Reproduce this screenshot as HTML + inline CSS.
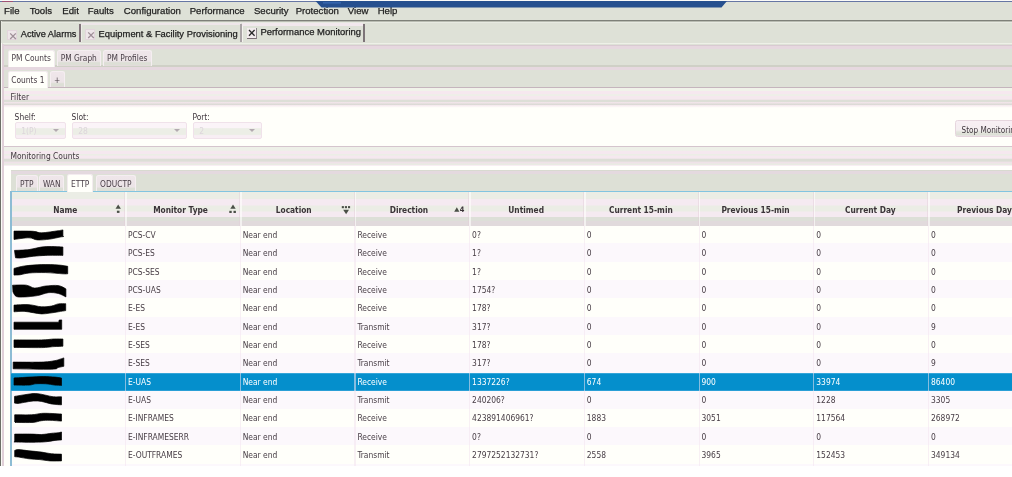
<!DOCTYPE html><html><head><meta charset="utf-8"><title>Performance Monitoring</title><style>html,body{margin:0;padding:0;}
body{width:1012px;height:477px;overflow:hidden;position:relative;background:#f5ecef;font-family:"Liberation Sans",sans-serif;color:#1c1c1c;}
.wrap{position:absolute;left:0;top:0;width:1012px;height:477px;overflow:hidden;will-change:transform;}
.abs{position:absolute;}
.menubar{position:absolute;left:0;top:0;width:1012px;height:20px;background:#dee1d7;}
.menubar span{position:absolute;top:5px;font-size:9.6px;line-height:12px;color:#1e1e1e;white-space:nowrap;-webkit-text-stroke:0.25px #1e1e1e;}
.topline{position:absolute;left:0;top:0;width:1012px;height:1px;background:#fafaf8;}
.topline2{position:absolute;left:0;top:0.9px;width:1012px;height:1.1px;background:#6676a4;}
.menuline{position:absolute;left:0;top:20px;width:1012px;height:1px;background:#7e8079;}
.tabstrip1{position:absolute;left:0;top:21px;width:1012px;height:24px;background:#dee1d7;}
.ttab{position:absolute;font-size:9.2px;line-height:12px;white-space:nowrap;color:#1e1e1e;-webkit-text-stroke:0.25px #1e1e1e;}
.tsep{position:absolute;top:24px;width:1.2px;height:18.4px;background:#8a7f85;}
.xbox{position:absolute;width:10px;height:10px;background:#eee6e9;}
.tah{font-family:"DejaVu Sans Condensed","DejaVu Sans","Liberation Sans",sans-serif;font-stretch:condensed;}
.pinkline{position:absolute;left:3px;width:1009px;height:1.5px;background:#eadce3;}
.strip{position:absolute;left:3px;width:1009px;background:#dee1d7;}
.stab{position:absolute;font-size:8.3px;line-height:10px;color:#473d45;white-space:nowrap;background:linear-gradient(#efe6ea 0,#ece4e7 68%,#dddfd6 78%,#dddfd6 90%,#e6dade 100%);border:1px solid #f5eef1;border-bottom:none;border-radius:2.5px 2.5px 0 0;box-sizing:border-box;text-align:center;}
.stab.on{background:#fffffa;border-color:#f3ecef;}
.lbl{position:absolute;font-size:8.4px;line-height:10px;color:#3f363d;white-space:nowrap;}
.dd{position:absolute;top:122.3px;height:16.3px;box-sizing:border-box;border:1px solid #f0e2ea;border-radius:2px;background:linear-gradient(#fbf4f8 0%,#fbf4f8 30%,#eceee6 38%,#eceee6 76%,#f8eef4 84%,#f8eef4 100%);}
.dd span{position:absolute;left:5.3px;top:2.6px;font-size:8.4px;line-height:10px;color:#ddd5db;}
.dd i{position:absolute;right:6px;top:6px;width:0;height:0;border-left:3px solid transparent;border-right:3px solid transparent;border-top:3.5px solid #b3aab0;}
.tbl{position:absolute;left:0;top:0;width:1012px;height:477px;}
.thead{position:absolute;left:12px;top:192px;width:1000px;height:34px;background:linear-gradient(#ebede5 0px,#ebede5 6.5px,#f5eaf1 7.5px,#f5eaf1 13px,#ebede5 14px,#ebede5 19px,#f5eaf1 20px,#f5eaf1 24.5px,#dddfd8 25.5px,#dddfd8 28.7px,#e1dadc 29.5px,#e1dadc 34px);}
.th{position:absolute;top:204.9px;font-size:8.3px;line-height:10px;font-weight:bold;text-align:center;color:#3a3338;white-space:nowrap;font-family:"DejaVu Sans Condensed","DejaVu Sans","Liberation Sans",sans-serif;font-stretch:condensed;}
.hsep{position:absolute;top:192.4px;width:2.7px;height:33.4px;background:linear-gradient(90deg,rgba(225,205,215,0.45) 0,rgba(225,205,215,0.45) 1px,rgba(255,255,253,0.6) 1.2px,rgba(255,255,253,0.6) 2.7px);}
.rbg{position:absolute;left:12px;width:1000px;background:#fffffa;}
.rbg.alt{background:#fcf8fc;}
.rbg.sel{background:#058fcc;left:11px;width:1001px;border-top:0.7px solid #35a5d8;border-bottom:0.7px solid #2a9fd6;box-sizing:border-box;}
.row{position:absolute;left:12px;width:1000px;height:18px;font-family:"DejaVu Sans Condensed","DejaVu Sans","Liberation Sans",sans-serif;font-stretch:condensed;font-size:8.4px;color:#473d45;}
.row.sel{color:#fff;}
.row .c{position:absolute;top:4.3px;line-height:10px;white-space:nowrap;}
.vsep{position:absolute;top:225.6px;width:1.1px;height:240.4px;background:rgba(242,228,238,0.55);}
.bottomwhite{position:absolute;left:0;top:466px;width:1012px;height:11px;background:#fff;}
</style></head><body><div class="wrap">
<div class="menubar">
<span style="left:4.1px">File</span><span style="left:29.7px">Tools</span><span style="left:62.3px">Edit</span><span style="left:87.7px">Faults</span><span style="left:123.8px">Configuration</span><span style="left:189.7px">Performance</span><span style="left:253.9px">Security</span><span style="left:295.7px">Protection</span><span style="left:347.8px">View</span><span style="left:377.7px">Help</span>
</div>
<div class="topline"></div><div class="topline2"></div><div class="abs" style="left:1.5px;top:0.9px;width:11.5px;height:1.1px;background:#a05274"></div>
<svg class="abs" style="left:310px;top:0" width="425" height="10" viewBox="310 0 425 10"><polygon points="315.5,1 727,1 721.5,7.6 321.5,7.6" fill="#26508f"/><rect x="323" y="2" width="18" height="1.6" fill="#3565ad"/></svg>
<div class="menuline"></div>
<div class="tabstrip1"></div>
<div class="abs" style="left:2px;top:21px;width:1010px;height:0.7px;background:#b9bcb2"></div><div class="abs" style="left:2.2px;top:21.6px;width:1010px;height:1.2px;background:#e7e9e1"></div><div class="abs" style="left:81px;top:23px;width:160px;height:2.4px;background:#eee6e9"></div>
<!-- top tabs -->
<div class="xbox" style="left:7.3px;top:29.7px;height:10.4px;border:0.6px solid #e3d5dc;box-sizing:border-box"><svg style="display:block" width="10" height="10" viewBox="0 0 10 10"><path d="M2.2 2.4 L7.8 8 M7.8 2.4 L2.2 8" stroke="#9f8f98" stroke-width="1.3" fill="none"/></svg></div>
<div class="ttab" style="left:20.8px;top:28.2px">Active Alarms</div>
<div class="tsep" style="left:79.4px;width:1.5px;background:#83757c"></div><div class="tsep" style="left:80.8px;background:#eeece8;width:1px"></div>
<div class="xbox" style="left:85.3px;top:29.3px;height:10.4px;border:0.6px solid #e3d5dc;box-sizing:border-box"><svg style="display:block" width="10" height="10" viewBox="0 0 10 10"><path d="M2.2 2.4 L7.8 8 M7.8 2.4 L2.2 8" stroke="#9f8f98" stroke-width="1.3" fill="none"/></svg></div>
<div class="ttab" style="left:98.6px;top:28.0px;font-size:9.38px">Equipment &amp; Facility Provisioning</div>
<div class="tsep" style="left:240.4px;background:#aaa4a6;width:1.2px"></div><div class="tsep" style="left:241.6px;background:#f4f2ee;width:1px"></div>
<div class="abs" style="left:242px;top:23.2px;width:121px;height:2.4px;background:#f2e8ed"></div>
<div class="xbox" style="left:246.6px;top:28px;width:10.3px;height:10.6px;background:#f2ebed;border-right:1px solid #8c8489;border-bottom:1px solid #7a6e74;box-sizing:border-box"><svg style="display:block" width="10" height="10" viewBox="0 0 10 10"><path d="M2 2 L7.6 7.8 M7.6 2 L2 7.8" stroke="#2a2a2a" stroke-width="1.3" fill="none"/></svg></div>
<div class="ttab" style="left:260.4px;top:26.2px;font-size:9.45px">Performance Monitoring</div>
<div class="tsep" style="left:363px;background:#7d7478;width:1.6px"></div>
<!-- second level tabs -->
<div class="abs" style="left:3px;top:42.7px;width:1009px;height:1.8px;background:#eef0e8"></div>
<div class="abs" style="left:3px;top:44.5px;width:1009px;height:1.5px;background:#d9cad2"></div>
<div class="abs" style="left:3px;top:46px;width:1009px;height:3px;background:#e6d8df"></div>
<div class="strip" style="top:49px;height:16.4px"></div>
<div class="abs" style="left:3px;top:65.3px;width:1009px;height:1.7px;background:#cfd0c6"></div>
<div class="abs" style="left:3px;top:67px;width:1009px;height:3px;background:#e6d8df"></div>
<div class="strip" style="top:70px;height:16.8px"></div>
<div class="abs" style="left:3px;top:86.7px;width:1009px;height:1.7px;background:#c5b5bd"></div>
<div class="stab on tah" style="left:7.6px;top:49.8px;width:47px;height:17.4px;padding-top:2.4px">PM Counts</div>
<div class="stab tah" style="left:57px;top:50.4px;width:43.5px;height:16px;padding-top:1.8px">PM Graph</div>
<div class="stab tah" style="left:102.7px;top:50.4px;width:49px;height:16px;padding-top:1.8px">PM Profiles</div>
<div class="stab on tah" style="left:7.6px;top:70.8px;width:40.6px;height:17.6px;padding-top:2.8px">Counts 1</div>
<div class="stab tah" style="left:49.8px;top:71px;width:14.8px;height:16.2px;padding-top:2.8px">+</div>
<!-- Filter header -->
<div class="abs" style="left:4px;top:88.4px;width:1008px;height:19.8px;background:linear-gradient(#f1f3ea 0,#f1f3ea 2.6px,#f6e8ef 3.4px,#f6e8ef 5.8px,#eeefe8 6.6px,#eeefe8 7.5px,#f5e8ee 8.3px,#f5e8ee 11.2px,#dddfd7 12.2px,#dddfd7 14px,#f4e6ec 14.6px,#f4e6ec 15.2px,#d9d9d3 15.8px,#d9d9d3 16.4px,#f5e8ee 17.2px,#fffffa 19.8px)"></div>
<div class="lbl tah" style="left:10.4px;top:92.1px">Filter</div>
<div class="abs" style="left:4px;top:108px;width:1008px;height:38px;background:#fffffa"></div>
<div class="lbl tah" style="left:14.6px;top:112px">Shelf:</div>
<div class="lbl tah" style="left:71.6px;top:112px">Slot:</div>
<div class="lbl tah" style="left:192.4px;top:112px">Port:</div>
<div class="dd tah" style="left:15px;width:51px"><span>1(P)</span><i></i></div>
<div class="dd tah" style="left:72px;width:115px"><span>28</span><i></i></div>
<div class="dd tah" style="left:193px;width:68.5px"><span>2</span><i></i></div>
<div class="abs tah" style="left:955px;top:120.3px;width:70px;height:17.2px;box-sizing:border-box;border:1px solid #e6d6de;border-radius:2.5px;background:linear-gradient(#f8eff4 0,#f4eef0 60%,#e4e5de 72%,#dde0d6 90%,#e8e2e4 100%);font-size:8.1px;line-height:10px;color:#3f363d;padding:3.4px 0 0 5.6px;white-space:nowrap">Stop Monitoring</div>
<!-- Monitoring Counts header -->
<div class="abs" style="left:4px;top:145.7px;width:1008px;height:1.6px;background:#d5c5cd"></div>
<div class="abs" style="left:4px;top:147.2px;width:1008px;height:19.2px;background:linear-gradient(#eef0e8 0,#eef0e8 3.4px,#f5e8ef 4.2px,#f5e8ef 6.5px,#eceee6 7.3px,#eceee6 8.2px,#f5e8ef 9px,#f5e8ef 11.2px,#dcded6 12.2px,#dcded6 14.2px,#efe2e8 15px,#efe2e8 16.2px,#e9ebe3 16.8px,#e9ebe3 17.6px,#f8eef3 18.2px,#f8eef3 18.8px,#fffffc 19.2px)"></div>
<div class="lbl tah" style="left:10.4px;top:150.9px">Monitoring Counts</div>
<div class="abs" style="left:4px;top:166.2px;width:1008px;height:3.4px;background:#fffffc"></div>
<div class="abs" style="left:3.9px;top:169.5px;width:7px;height:297px;background:#fffffa"></div>
<div class="abs" style="left:10.5px;top:169.6px;width:1002px;height:1.1px;background:#d8dad0"></div>
<div class="abs" style="left:10.5px;top:170.6px;width:1002px;height:3.8px;background:#e4d9df"></div>
<div class="abs" style="left:10.5px;top:174.3px;width:1002px;height:17.2px;background:#dde0d6"></div>
<!-- inner tabs -->
<div class="stab tah" style="left:16px;top:175px;width:21.6px;height:17px;padding-top:3.2px">PTP</div>
<div class="stab tah" style="left:39px;top:175px;width:25.4px;height:17px;padding-top:3.2px">WAN</div>
<div class="stab tah" style="left:96px;top:175px;width:39.6px;height:17px;padding-top:3.2px">ODUCTP</div>
<!-- table border -->
<div class="abs" style="left:10.3px;top:191px;width:1002px;height:1.3px;background:#82c4e0"></div>
<div class="abs" style="left:10.3px;top:191px;width:1.8px;height:275px;background:#8dbcd4"></div>
<div class="stab on tah" style="left:67px;top:174.4px;width:26.4px;height:18.4px;padding-top:3.8px">ETTP</div>
<!-- left frame -->
<div class="abs" style="left:0;top:20.6px;width:1.2px;height:445.4px;background:#6c6e66"></div>
<div class="abs" style="left:1.2px;top:21.4px;width:1px;height:22px;background:#e6e8e0"></div>
<div class="abs" style="left:1.2px;top:43px;width:1.1px;height:423px;background:#fafaf5"></div>
<div class="abs" style="left:2.2px;top:44.4px;width:1.7px;height:421.6px;background:#e0d0d8"></div>

<div class="tbl">
<div class="thead"></div>
<div class="th" style="left:9.0px;width:112.7px">Name</div>
<div class="th" style="left:123.2px;width:114.7px">Monitor Type</div>
<div class="th" style="left:236.4px;width:114.7px">Location</div>
<div class="th" style="left:351.6px;width:114.7px">Direction</div>
<div class="th" style="left:468.8px;width:114.7px">Untimed</div>
<div class="th" style="left:583.5px;width:114.7px">Current 15-min</div>
<div class="th" style="left:698.2px;width:114.7px">Previous 15-min</div>
<div class="th" style="left:813.0px;width:114.7px">Current Day</div>
<div class="th" style="left:957.0px;width:80px;text-align:left">Previous Day</div>
<div class="hsep" style="left:124.2px"></div>
<div class="hsep" style="left:238.9px"></div>
<div class="hsep" style="left:353.6px"></div>
<div class="hsep" style="left:468.3px"></div>
<div class="hsep" style="left:583.0px"></div>
<div class="hsep" style="left:697.8px"></div>
<div class="hsep" style="left:812.5px"></div>
<div class="hsep" style="left:927.2px"></div>
<div class="rbg" style="top:225.60px;height:18.05px"></div>
<div class="rbg alt" style="top:243.35px;height:18.65px"></div>
<div class="rbg" style="top:261.70px;height:18.65px"></div>
<div class="rbg alt" style="top:280.05px;height:18.65px"></div>
<div class="rbg" style="top:298.40px;height:18.65px"></div>
<div class="rbg alt" style="top:316.75px;height:18.65px"></div>
<div class="rbg" style="top:335.10px;height:18.65px"></div>
<div class="rbg alt" style="top:353.45px;height:19.45px"></div>
<div class="rbg sel" style="top:372.60px;height:18.60px"></div>
<div class="rbg alt" style="top:390.90px;height:17.90px"></div>
<div class="rbg" style="top:408.50px;height:18.65px"></div>
<div class="rbg alt" style="top:426.85px;height:18.65px"></div>
<div class="rbg" style="top:445.20px;height:18.65px"></div>
<div class="rbg alt" style="top:463.55px;height:2.75px"></div>
<div class="row" style="top:225.55px">
<span class="c" style="left:116.0px">PCS-CV</span>
<span class="c" style="left:230.7px">Near end</span>
<span class="c" style="left:345.4px">Receive</span>
<span class="c" style="left:460.1px">0?</span>
<span class="c" style="left:574.8px">0</span>
<span class="c" style="left:689.5px">0</span>
<span class="c" style="left:804.3px">0</span>
<span class="c" style="left:919.0px">0</span>
</div>
<div class="row" style="top:243.90px">
<span class="c" style="left:116.0px">PCS-ES</span>
<span class="c" style="left:230.7px">Near end</span>
<span class="c" style="left:345.4px">Receive</span>
<span class="c" style="left:460.1px">1?</span>
<span class="c" style="left:574.8px">0</span>
<span class="c" style="left:689.5px">0</span>
<span class="c" style="left:804.3px">0</span>
<span class="c" style="left:919.0px">0</span>
</div>
<div class="row" style="top:262.25px">
<span class="c" style="left:116.0px">PCS-SES</span>
<span class="c" style="left:230.7px">Near end</span>
<span class="c" style="left:345.4px">Receive</span>
<span class="c" style="left:460.1px">1?</span>
<span class="c" style="left:574.8px">0</span>
<span class="c" style="left:689.5px">0</span>
<span class="c" style="left:804.3px">0</span>
<span class="c" style="left:919.0px">0</span>
</div>
<div class="row" style="top:280.60px">
<span class="c" style="left:116.0px">PCS-UAS</span>
<span class="c" style="left:230.7px">Near end</span>
<span class="c" style="left:345.4px">Receive</span>
<span class="c" style="left:460.1px">1754?</span>
<span class="c" style="left:574.8px">0</span>
<span class="c" style="left:689.5px">0</span>
<span class="c" style="left:804.3px">0</span>
<span class="c" style="left:919.0px">0</span>
</div>
<div class="row" style="top:298.95px">
<span class="c" style="left:116.0px">E-ES</span>
<span class="c" style="left:230.7px">Near end</span>
<span class="c" style="left:345.4px">Receive</span>
<span class="c" style="left:460.1px">178?</span>
<span class="c" style="left:574.8px">0</span>
<span class="c" style="left:689.5px">0</span>
<span class="c" style="left:804.3px">0</span>
<span class="c" style="left:919.0px">0</span>
</div>
<div class="row" style="top:317.30px">
<span class="c" style="left:116.0px">E-ES</span>
<span class="c" style="left:230.7px">Near end</span>
<span class="c" style="left:345.4px">Transmit</span>
<span class="c" style="left:460.1px">317?</span>
<span class="c" style="left:574.8px">0</span>
<span class="c" style="left:689.5px">0</span>
<span class="c" style="left:804.3px">0</span>
<span class="c" style="left:919.0px">9</span>
</div>
<div class="row" style="top:335.65px">
<span class="c" style="left:116.0px">E-SES</span>
<span class="c" style="left:230.7px">Near end</span>
<span class="c" style="left:345.4px">Receive</span>
<span class="c" style="left:460.1px">178?</span>
<span class="c" style="left:574.8px">0</span>
<span class="c" style="left:689.5px">0</span>
<span class="c" style="left:804.3px">0</span>
<span class="c" style="left:919.0px">0</span>
</div>
<div class="row" style="top:354.00px">
<span class="c" style="left:116.0px">E-SES</span>
<span class="c" style="left:230.7px">Near end</span>
<span class="c" style="left:345.4px">Transmit</span>
<span class="c" style="left:460.1px">317?</span>
<span class="c" style="left:574.8px">0</span>
<span class="c" style="left:689.5px">0</span>
<span class="c" style="left:804.3px">0</span>
<span class="c" style="left:919.0px">9</span>
</div>
<div class="row sel" style="top:372.35px">
<span class="c" style="left:116.0px">E-UAS</span>
<span class="c" style="left:230.7px">Near end</span>
<span class="c" style="left:345.4px">Receive</span>
<span class="c" style="left:460.1px">1337226?</span>
<span class="c" style="left:574.8px">674</span>
<span class="c" style="left:689.5px">900</span>
<span class="c" style="left:804.3px">33974</span>
<span class="c" style="left:919.0px">86400</span>
</div>
<div class="row" style="top:390.70px">
<span class="c" style="left:116.0px">E-UAS</span>
<span class="c" style="left:230.7px">Near end</span>
<span class="c" style="left:345.4px">Transmit</span>
<span class="c" style="left:460.1px">240206?</span>
<span class="c" style="left:574.8px">0</span>
<span class="c" style="left:689.5px">0</span>
<span class="c" style="left:804.3px">1228</span>
<span class="c" style="left:919.0px">3305</span>
</div>
<div class="row" style="top:409.05px">
<span class="c" style="left:116.0px">E-INFRAMES</span>
<span class="c" style="left:230.7px">Near end</span>
<span class="c" style="left:345.4px">Receive</span>
<span class="c" style="left:460.1px">423891406961?</span>
<span class="c" style="left:574.8px">1883</span>
<span class="c" style="left:689.5px">3051</span>
<span class="c" style="left:804.3px">117564</span>
<span class="c" style="left:919.0px">268972</span>
</div>
<div class="row" style="top:427.40px">
<span class="c" style="left:116.0px">E-INFRAMESERR</span>
<span class="c" style="left:230.7px">Near end</span>
<span class="c" style="left:345.4px">Receive</span>
<span class="c" style="left:460.1px">0?</span>
<span class="c" style="left:574.8px">0</span>
<span class="c" style="left:689.5px">0</span>
<span class="c" style="left:804.3px">0</span>
<span class="c" style="left:919.0px">0</span>
</div>
<div class="row" style="top:445.75px">
<span class="c" style="left:116.0px">E-OUTFRAMES</span>
<span class="c" style="left:230.7px">Near end</span>
<span class="c" style="left:345.4px">Transmit</span>
<span class="c" style="left:460.1px">2797252132731?</span>
<span class="c" style="left:574.8px">2558</span>
<span class="c" style="left:689.5px">3965</span>
<span class="c" style="left:804.3px">152453</span>
<span class="c" style="left:919.0px">349134</span>
</div>
<div class="vsep" style="left:125.00px"></div>
<div class="vsep" style="left:239.72px"></div>
<div class="vsep" style="left:354.44px"></div>
<div class="vsep" style="left:469.16px"></div>
<div class="vsep" style="left:583.88px"></div>
<div class="vsep" style="left:698.60px"></div>
<div class="vsep" style="left:813.32px"></div>
<div class="vsep" style="left:928.04px"></div>
<svg class="abs" style="left:110px;top:200px" width="360" height="20" viewBox="110 200 360 20" fill="#4a4f47">
<polygon points="118.2,204.4 120.9,208.8 115.5,208.8"/><rect x="116.9" y="210.7" width="2.6" height="2.2"/>
<polygon points="233,204.4 235.7,208.8 230.3,208.8"/><rect x="229.3" y="210.8" width="2.4" height="2.2"/><rect x="233.5" y="210.8" width="2.4" height="2.2"/>
<rect x="341.8" y="206.1" width="2.1" height="2.1"/><rect x="344.9" y="206.1" width="2.1" height="2.1"/><rect x="348" y="206.1" width="2.1" height="2.1"/><polygon points="343.2,209.8 349,209.8 346.1,214.2"/>
<polygon points="456.8,207.2 459.4,211.7 454.2,211.7"/>
<text x="459.7" y="212.1" font-family="'DejaVu Sans Condensed','DejaVu Sans','Liberation Sans',sans-serif" font-weight="bold" font-size="7.4px" fill="#3a3338">4</text>
</svg>

<svg class="abs" style="left:0;top:220px" width="140" height="250" viewBox="0 220 140 250" fill="#000" stroke="#000" stroke-width="0.7" stroke-linejoin="round">
<path d="M14.0 231.1C17.2 231.1 28.6 231.0 33.2 231.3C37.8 231.6 37.3 232.9 41.5 232.8C45.7 232.7 54.7 231.2 58.3 230.7C61.9 230.2 62.1 230.0 62.9 229.9L62.9 237.0C62.8 236.9 64.7 236.2 62.5 236.6C60.3 236.9 54.1 238.5 49.9 239.1C45.7 239.7 40.9 240.1 37.4 239.9C33.9 239.7 32.9 237.9 29.0 237.8C25.1 237.7 16.5 239.2 14.0 239.5Z"/>
<path d="M14.5 250.4C16.9 250.3 24.5 250.2 29.0 249.6C33.5 249.0 37.7 247.5 41.5 247.0C45.3 246.5 48.0 246.5 51.6 246.5C55.2 246.5 61.0 246.9 62.9 247.0L62.9 255.4C60.0 255.4 50.7 255.2 45.7 255.4C40.8 255.6 37.4 255.9 33.2 256.3C29.0 256.7 23.6 257.8 20.6 258.0C17.7 258.2 16.4 257.8 15.5 257.8Z"/>
<path d="M14.0 268.4C15.8 268.0 20.2 266.5 24.8 265.9C29.4 265.3 35.9 264.8 41.5 264.6C47.1 264.5 53.9 264.7 58.3 265.0C62.7 265.3 66.1 266.1 67.7 266.3L67.7 273.8C66.8 273.8 66.2 274.0 62.5 273.8C58.8 273.6 51.3 272.7 45.7 272.6C40.1 272.5 33.2 272.6 29.0 273.0C24.8 273.4 23.1 274.3 20.6 274.7C18.1 275.1 15.1 275.0 14.0 275.1Z"/>
<path d="M12.6 285.2C14.9 285.2 22.7 284.7 26.4 285.2C30.1 285.7 31.6 288.0 34.8 288.1C38.0 288.2 41.8 286.4 45.7 286.0C49.6 285.6 54.9 285.1 58.3 285.6C61.7 286.1 64.6 288.3 65.9 288.9L65.9 296.9C64.6 296.3 61.2 294.2 58.3 293.5C55.4 292.8 51.8 292.3 48.3 292.7C44.8 293.1 41.3 294.9 37.4 295.6C33.5 296.3 28.3 296.8 24.8 296.9C21.3 297.0 18.4 297.3 16.4 296.5C14.4 295.7 13.6 292.7 13.0 291.9Z"/>
<path d="M14.0 305.1C16.5 305.0 24.4 304.4 29.0 304.7C33.6 305.0 37.7 306.6 41.5 306.8C45.3 307.0 48.8 306.5 51.6 306.0C54.4 305.5 55.9 304.3 58.3 303.9C60.6 303.5 64.5 303.7 65.7 303.7L65.7 310.6C64.5 310.8 60.9 311.4 58.3 311.8C55.7 312.2 52.7 312.8 49.9 313.1C47.1 313.5 44.3 314.0 41.5 313.9C38.7 313.8 36.0 313.1 33.2 312.7C30.4 312.3 28.0 311.5 24.8 311.4C21.6 311.2 15.8 311.7 14.0 311.8Z"/>
<path d="M14 322.2L58.8 322.2L59.1 320.1L61.7 319.9L61.7 329.3L14 329.3Z"/>
<path d="M14.0 339.9C18.6 339.9 34.8 340.0 41.5 339.9C48.2 339.8 50.5 339.1 54.1 339.0C57.7 338.9 61.4 339.0 62.9 339.0L62.9 346.2C61.4 346.3 57.7 346.4 54.1 346.6C50.5 346.8 48.2 347.5 41.5 347.6C34.8 347.7 18.6 347.4 14.0 347.4Z"/>
<path d="M13.2 362.1C17.9 362.1 34.7 362.3 41.5 362.1C48.3 361.9 51.0 361.3 54.1 360.8C57.2 360.3 58.4 359.7 60.0 359.2C61.6 358.7 63.2 358.1 63.8 357.9L63.8 366.3C62.9 366.5 60.3 367.0 58.3 367.5C56.3 368.0 59.1 369.0 51.6 369.2C44.1 369.4 19.6 368.9 13.2 368.8Z"/>
<path d="M14.0 378.0C16.5 377.9 24.1 377.4 29.0 377.1C33.9 376.9 38.9 376.5 43.2 376.5C47.5 376.5 52.0 376.9 55.0 377.1C58.0 377.4 60.4 377.9 61.5 378.0L61.5 385.5C60.4 385.4 57.6 385.4 55.0 385.1C52.4 384.8 48.9 384.0 45.7 383.8C42.5 383.6 38.5 383.6 35.7 383.8C32.9 384.0 32.6 384.9 29.0 385.1C25.4 385.3 16.5 385.1 14.0 385.1Z"/>
<path d="M14.5 396.4C16.2 396.1 21.3 395.2 24.8 394.7C28.3 394.2 32.2 393.4 35.7 393.5C39.2 393.6 42.8 394.6 45.7 395.2C48.6 395.8 50.7 396.5 53.3 396.8C55.9 397.1 60.1 396.8 61.5 396.8L61.5 404.8C59.9 404.7 54.9 404.6 51.6 404.0C48.3 403.4 44.6 401.9 41.5 401.4C38.4 400.9 36.0 400.9 33.2 401.0C30.4 401.1 27.3 401.9 24.8 402.3C22.3 402.7 19.7 403.3 18.0 403.4C16.3 403.5 15.1 403.2 14.5 403.1Z"/>
<path d="M14.7 414.8C17.5 414.8 27.0 415.0 31.5 414.8C36.0 414.6 38.4 413.6 41.5 413.4C44.6 413.2 46.6 413.3 49.9 413.4C53.2 413.5 59.6 413.9 61.5 414.0L61.5 421.1C59.6 421.0 53.2 420.4 49.9 420.3C46.6 420.2 44.3 420.4 41.5 420.7C38.7 421.0 37.1 422.1 33.2 422.4C29.3 422.7 21.1 422.5 18.0 422.4C14.9 422.3 15.2 422.0 14.7 421.9Z"/>
<path d="M14.7 434.1C17.5 434.1 27.0 434.0 31.5 434.1C36.0 434.2 38.1 434.6 41.5 434.5C44.9 434.4 48.8 433.6 51.6 433.3C54.4 433.0 56.6 432.9 58.3 432.7C59.9 432.5 61.0 432.1 61.5 432.0L61.5 440.0C60.4 440.1 58.3 440.0 55.0 440.4C51.7 440.8 47.9 441.8 41.5 442.1C35.1 442.4 20.9 442.2 16.4 442.1C11.9 442.0 15.0 441.7 14.7 441.6Z"/>
<path d="M14.7 450.4C15.4 450.3 16.5 449.5 18.9 449.6C21.3 449.7 25.2 450.4 29.0 450.8C32.8 451.2 37.7 451.6 41.5 452.1C45.3 452.6 48.3 453.5 51.6 453.8C54.9 454.1 59.9 454.1 61.5 454.2L61.5 460.9C59.6 460.9 53.5 461.1 49.9 460.9C46.3 460.7 43.4 460.0 39.9 459.6C36.4 459.2 32.5 459.2 29.0 458.8C25.5 458.4 21.3 457.5 18.9 457.1C16.5 456.8 15.4 456.8 14.7 456.7Z"/>
</svg>

</div>
<div class="bottomwhite"></div>
</div></body></html>
